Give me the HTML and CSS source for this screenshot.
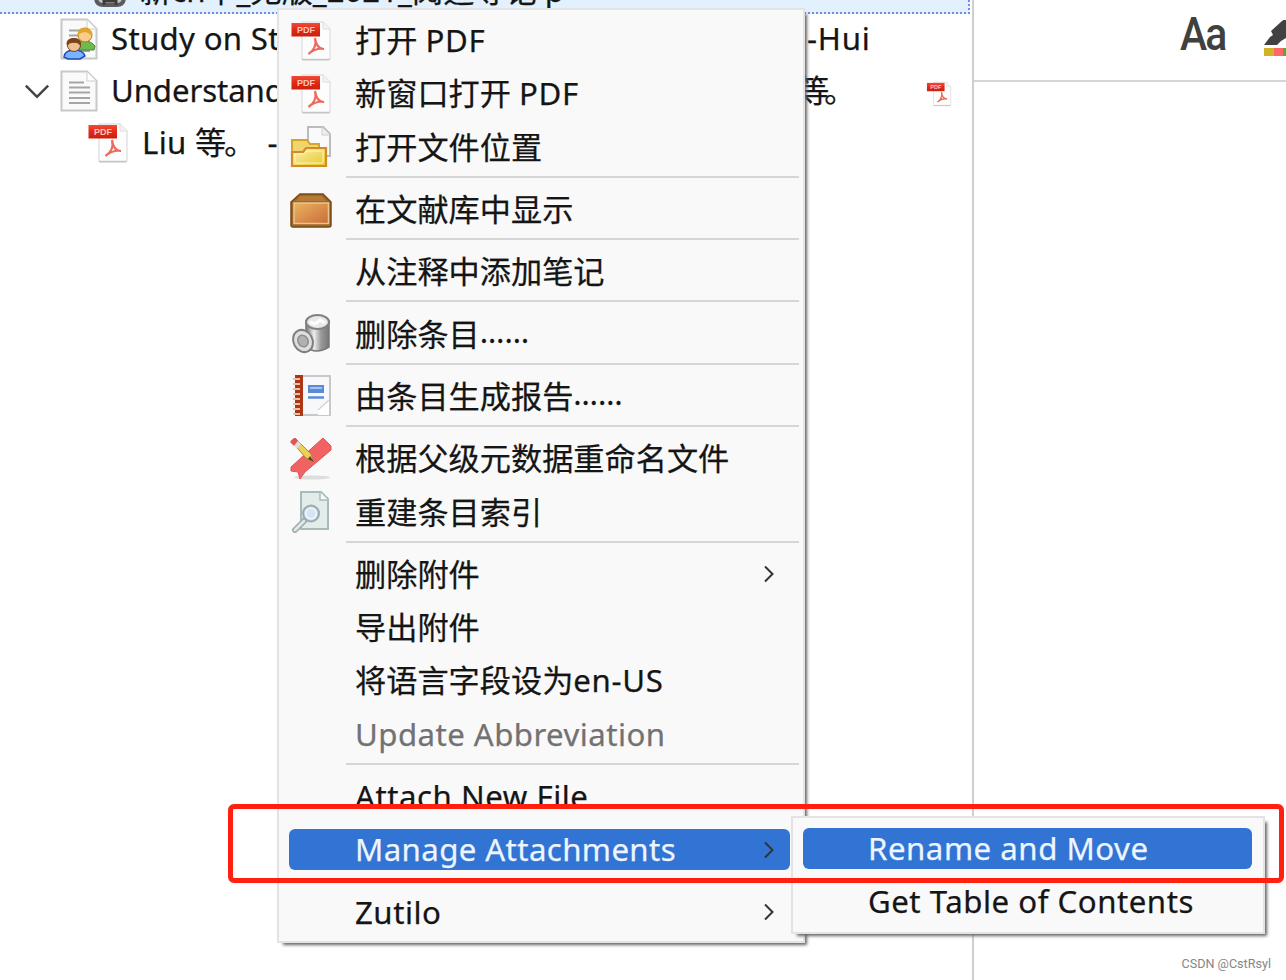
FILE: index.html
```html
<!DOCTYPE html>
<html lang="zh-CN">
<head>
<meta charset="utf-8">
<title>Zotero</title>
<link rel="stylesheet" href="styles.css">
</head>
<body>
<svg class="defs" aria-hidden="true">
  <defs>
    <linearGradient id="red" x1="0" y1="0" x2="0" y2="1"><stop offset="0" stop-color="#f04a38"/><stop offset=".5" stop-color="#e42815"/><stop offset="1" stop-color="#c9200f"/></linearGradient>
    <linearGradient id="gold" x1="0" y1="0" x2="1" y2="1"><stop offset="0" stop-color="#faf0b4"/><stop offset="1" stop-color="#e8c922"/></linearGradient>
    <linearGradient id="wood" x1="0" y1="0" x2="1" y2="1"><stop offset="0" stop-color="#e9b45f"/><stop offset="1" stop-color="#cb6c39"/></linearGradient>
    <linearGradient id="steel"><stop offset="0" stop-color="#777"/><stop offset=".35" stop-color="#eee"/><stop offset=".65" stop-color="#999"/><stop offset="1" stop-color="#777"/></linearGradient>
    <symbol id="pdf" viewBox="0 0 42 42">
      <path d="M12 2H33L40 9V38Q40 40 38 40H14Q12 40 12 38Z" fill="#fdfdfd" stroke="#e2e2e2" stroke-width="1.5"/>
      <path d="M12 39.5H39.5" stroke="#c5c5c5" stroke-width="1.5"/>
      <path d="M33 2V9H40" fill="#f3f3f3" stroke="#dedede"/>
      <path d="M25 18C27 26 23 31 18.500 34M25 18C26 26 30 29 34 29C28 28 23 30 18.500 34" fill="none" stroke="#ee6a5e" stroke-width="2.200"/>
      <rect x="1.500" y="3" width="28.500" height="13.500" fill="url(#red)"/>
      <text x="16" y="12.500" class="pdf-label">PDF</text>
    </symbol>
    <symbol id="page" viewBox="0 0 38 42">
      <path d="M1.500 1.500H27L36.500 11V40.500H1.500Z" fill="#fafafa" stroke="#c8c8c8" stroke-width="2"/>
      <path d="M27 2V11H36" fill="#fff" stroke="#ddd" stroke-width="1.500"/>
      <path d="M9 12.500H24M9 17.500H30M9 22.500H30M9 28H30M9 33H30" stroke="#a5a5a5" stroke-width="1.800"/>
    </symbol>
    <symbol id="chev" viewBox="0 0 12 18"><path d="M2 1.500L9.500 9L2 16.500" fill="none" stroke="#333" stroke-width="2"/></symbol>
  </defs>
</svg>
<div class="app">
  <section class="library">
    <div class="row selected">
      <svg class="clip" viewBox="0 0 34 30"><path d="M3 19Q3 27 10 27H24Q31 27 31 19" fill="#c4c4c4" stroke="#5c5c5c" stroke-width="4"/><path d="M11 27V20M23 27V20M11 23H23" fill="none" stroke="#3c3c3c" stroke-width="3"/></svg>
      <span class="file">新cn平_无版_2021_阅造等记 p</span>
    </div>
    <div class="row">
      <span class="twisty"></span>
      <svg class="item-icon" viewBox="0 0 38 42"><use href="#page"/>
        <path d="M17 31Q17 23 24 23Q31 23 35 28L34 32H18Z" fill="#70b94c" stroke="#438a2e"/><circle cx="25" cy="17" r="7" fill="#f8cc8a" stroke="#b77a1a"/><path d="M18 17Q17 9 25 10Q33 10 32 19Q29 14 24 14Q20 15 18 17Z" fill="#e4a62a"/>
        <path d="M4 39Q5 32 14 32Q23 32 25 38L20 41H8Z" fill="#78b4ff" stroke="#2547bd" stroke-width="1.500"/><circle cx="14" cy="27" r="6.500" fill="#efc193" stroke="#774017"/><path d="M7 28Q5 20 14 20Q22 20 21 29Q18 24 14 25Q10 24 7 28Z" fill="#7b431b"/></svg>
      <span class="title">Study on St</span>
      <span class="creator">-Hui</span>
    </div>
    <div class="row">
      <svg class="twisty" viewBox="0 0 24 16"><path d="M1.500 2.500L12 13L22.500 2.500" fill="none" stroke="#444" stroke-width="2.400"/></svg>
      <svg class="item-icon"><use href="#page"/></svg>
      <span class="title second">Understand</span>
      <span class="creator etal">等。</span>
      <svg class="attachment"><use href="#pdf"/></svg>
    </div>
    <div class="row child">
      <svg class="pdf-icon"><use href="#pdf"/></svg>
      <span class="title nested">Liu <span class="tight">等。</span><span class="dash">-</span></span>
    </div>
  </section>
  <section class="reader">
    <div class="toolbar">
      <span class="font-button">Aa</span>
      <svg class="marker" viewBox="0 0 30 36"><path d="M0 25L6 17L9 15L7 11L18 1L24 -3L38 8L22 18L17 21L13 25Z" fill="#414141"/><path d="M0 28H10V36H0Z" fill="#d0b326"/><path d="M10 28H19V36H10Z" fill="#ff6668"/><path d="M19 28H30V36H19Z" fill="#4caf2d"/></svg>
    </div>
  </section>
</div>

<nav class="menu main-menu">
  <div class="item"><span class="icon"><svg class="i42"><use href="#pdf"/></svg></span><span>打开 <i class="pdf-word">PDF</i></span></div>
  <div class="item"><span class="icon"><svg class="i42"><use href="#pdf"/></svg></span><span>新窗口打开 <i class="pdf-word">PDF</i></span></div>
  <div class="item"><span class="icon"><svg class="i42" viewBox="0 0 42 42"><path d="M18 1H33L40 8V30H18Z" fill="#fafafa" stroke="#bbb" stroke-width="2"/><path d="M32 1V9H40" fill="#eee" stroke="#ccc"/><path d="M2 40V14H17L20 18H29V40Z" fill="#efd56c" stroke="#d5a529" stroke-width="2"/><path d="M2 40V26H13L16 22H36V40Z" fill="url(#gold)" stroke="#d58a28" stroke-width="2.200"/><path d="M5 37V28H14L17 25H33V37Z" fill="none" stroke="#fff3bd"/></svg></span><span>打开文件位置</span></div>
  <hr>
  <div class="item"><span class="icon"><svg class="i42" viewBox="0 0 42 42"><path d="M10 5H33L41 13V36Q41 38 39 38H3Q1 38 1 36V13Z" fill="#9c672b" stroke="#7b4a14" stroke-width="1.500"/><path d="M10 7H32L36 12H6Z" fill="#b37b36"/><rect x="4" y="14" width="34.500" height="20.500" fill="url(#wood)" stroke="#ecc58d" stroke-width="1.500"/></svg></span><span>在文献库中显示</span></div>
  <hr>
  <div class="item"><span class="icon"></span><span>从注释中添加笔记</span></div>
  <hr>
  <div class="item"><span class="icon"><svg class="i42" viewBox="0 0 42 42"><path d="M16 8V34Q26 42 39 34V8Z" fill="url(#steel)" stroke="#777" stroke-width="1.500"/><ellipse cx="27.500" cy="9" rx="11.500" ry="7" fill="#e8e8e8" stroke="#808080" stroke-width="2"/><path d="M20 9L25 11L30 7L35 10" fill="none" stroke="#fff" stroke-width="3"/><ellipse cx="13" cy="28" rx="9.500" ry="11.500" transform="rotate(-28 13 28)" fill="#dfdfdf" stroke="#808080" stroke-width="2"/><ellipse cx="13" cy="28" rx="5" ry="6" transform="rotate(-28 13 28)" fill="#b0b0b0" stroke="#8e8e8e" stroke-width="1.500"/></svg></span><span class="dots">删除条目<i>……</i></span></div>
  <hr>
  <div class="item"><span class="icon"><svg class="i42" viewBox="0 0 42 42"><path d="M12 1H40V40H12Z" fill="#f7f8fb" stroke="#c8c8c8" stroke-width="2"/><path d="M5 0H13V41H5Z" fill="#ad3715"/><path d="M3 4H10M3 9H10M3 14H10M3 19H10M3 24H10M3 29H10M3 34H10M3 39H10" stroke="#e9c1aa" stroke-width="2"/><path d="M18 10H34V18H18Z" fill="#5d8ad7"/><path d="M20 13H32" stroke="#a9c3f0" stroke-width="2"/><path d="M18 22.500H34" stroke="#5d8ad7" stroke-width="2.500"/><path d="M28 36L39 25V40H28Z" fill="#fff"/><path d="M28 35L39 25" stroke="#d5d5d5" stroke-width="1.500"/></svg></span><span class="dots">由条目生成报告<i>……</i></span></div>
  <hr>
  <div class="item"><span class="icon"><svg class="i42" viewBox="0 0 42 42"><ellipse cx="22" cy="39.500" rx="18" ry="2" fill="#ddd"/><path d="M33 0L41 8V12L15 34L10 41L8 34L1 33V29Z" fill="#f16363" stroke="#e45050"/><path d="M1 3L5 0L21 16L23 23L16 20Z" fill="#ebcf58" stroke="#ad8a34"/><path d="M0 4L5 -1L8 3L4 8Z" fill="#df5656"/><path d="M4 8L8 3L11 6L7 11Z" fill="#ddd"/><path d="M20 18L24 24L18 21Z" fill="#514328"/></svg></span><span>根据父级元数据重命名文件</span></div>
  <div class="item"><span class="icon"><svg class="i42" viewBox="0 0 42 42"><path d="M11 1H31L38 8V38H11Z" fill="#e2eceb" stroke="#a8bbba" stroke-width="2"/><path d="M30 1V9H38" fill="#f8fafa" stroke="#a8bbba" stroke-width="1.500"/><path d="M15 29L5 39" stroke="#9eafaf" stroke-width="6" stroke-linecap="round"/><path d="M14 30L5 39" stroke="#e2eaea" stroke-width="2.500" stroke-linecap="round"/><circle cx="21" cy="22.500" r="8" fill="#bfd2e8" stroke="#9dacae" stroke-width="2"/><circle cx="21" cy="22.500" r="5.500" fill="#d6e4f5" stroke="#f2f7fb" stroke-width="1.500"/></svg></span><span>重建条目索引</span></div>
  <hr>
  <div class="item"><span class="icon"></span><span>删除附件</span><svg class="chev"><use href="#chev"/></svg></div>
  <div class="item"><span class="icon"></span><span>导出附件</span></div>
  <div class="item"><span class="icon"></span><span>将语言字段设为<i class="lang">en-US</i></span></div>
  <div class="item disabled"><span class="icon"></span><span class="update">Update Abbreviation</span></div>
  <hr>
  <div class="item"><span class="icon"></span><span class="attach">Attach New File</span></div>
  <div class="item active"><span class="icon"></span><span class="manage">Manage Attachments</span><svg class="chev"><use href="#chev"/></svg></div>
  <hr>
  <div class="item"><span class="icon"></span><span class="attach">Zutilo</span><svg class="chev"><use href="#chev"/></svg></div>
</nav>

<nav class="menu sub-menu">
  <div class="item active"><span class="attach">Rename and Move</span></div>
  <div class="item"><span class="attach">Get Table of Contents</span></div>
</nav>
<div class="highlight-frame"></div>
<div class="watermark">CSDN @CstRsyl</div>
</body>
</html>
```
FILE: styles.css
```css
* { box-sizing: border-box; }
body {
  margin: 0;
  width: 1286px;
  height: 980px;
  overflow: hidden;
  position: relative;
  background: #fff;
  color: #151515;
  font: 31.2px/1 "Noto Sans", "Noto Sans CJK SC", sans-serif;
  -webkit-text-stroke: 0.25px currentColor;
}
i { font-style: normal; }
svg { display: block; flex: none; overflow: hidden; }
.defs { position: absolute; width: 0; height: 0; }
.pdf-label { font: bold 9px "Liberation Sans", sans-serif; fill: #ffc4ba; text-anchor: middle; -webkit-text-stroke: 0; }

.app { display: flex; height: 980px; }
.library { flex: none; width: 974px; border-right: 2px solid #cfcfcf; overflow: hidden; }
.row { display: flex; align-items: center; height: 52px; white-space: nowrap; padding-left: 24px; }
.row.selected {
  width: 970px;
  height: 14px;
  padding-left: 92px;
  align-items: flex-end;
  background: #e3f1ff;
  border-bottom: 2px dotted #6f8fe4;
  border-right: 2px dotted #6f8fe4;
  overflow: hidden;
}
.clip { width: 36px; height: 30px; margin-bottom: 4px; }
.file { margin-left: 12px; line-height: 44px; margin-bottom: 0; }
.twisty { width: 26px; height: 17px; flex: none; margin-top: -2px; }
.item-icon { width: 38px; height: 42px; margin: -2px 0 0 10px; }
.title { width: 188px; margin: -4px 0 0 13px; line-height: 44px; flex: none; letter-spacing: 0.3px; }
.title.second { width: 168px; margin-right: 20px; letter-spacing: -0.1px; }
.creator { width: 119px; margin: -4px 0 0 508px; line-height: 44px; flex: none; letter-spacing: 0.8px; }
.creator.etal { margin-left: 499px; width: 128px; letter-spacing: -5px; }
.attachment { width: 26px; height: 26px; margin-top: 4px; }
.child { padding-left: 87px; }
.pdf-icon { width: 42px; height: 42px; margin-top: -3px; }
.title.nested { width: 160px; }
.tight { letter-spacing: -2px; }
.dash { margin-left: 14px; }

.reader { flex: 1; min-width: 0; }
.toolbar { height: 82px; border-bottom: 2px solid #d5d5d5; display: flex; padding: 0 0 0 206px; overflow: hidden; }
.font-button { width: 84px; flex: none; font: 500 46px/68px Roboto, sans-serif; letter-spacing: -2px; color: #404040; transform: scaleX(.89); transform-origin: left center; -webkit-text-stroke: 0; }
.marker { width: 30px; height: 36px; margin-top: 20px; }

.menu {
  position: absolute;
  background: #f9f9f9;
  border: 2px solid #e3e3e3;
  box-shadow: 4px 4px 3px -2px #666;
  white-space: nowrap;
}
.main-menu { left: 277px; top: 8px; width: 528px; height: 935px; padding: 4px 4px 0 10px; }
.item { position: relative; display: flex; align-items: center; height: 53.3px; line-height: 41px; width: 501px; }
.icon { width: 66px; flex: none; padding-left: 1px; }
.i42 { width: 42px; height: 42px; }
.chev { width: 12px; height: 18px; margin-left: auto; margin-right: 15px; }
hr { height: 2px; border: 0; background: #d6d6d6; margin: 2px 0 5px 57px; }
.pdf-word, .lang { letter-spacing: 0.7px; }
.dots i { position: relative; top: -3px; }
.update { letter-spacing: 0.45px; }
.attach { letter-spacing: 0.53px; }
.manage { letter-spacing: 0.4px; }
.active { color: #eef5ff; }
.active::before {
  content: "";
  position: absolute;
  inset: 6px 0 6px 0;
  background: #3174d4;
  border-radius: 6px;
}
.active > * { position: relative; }
.disabled { color: #727272; }
.sub-menu { left: 791px; top: 816px; width: 474px; height: 118px; padding: 4px 10px; }
.sub-menu .item { width: 449px; padding-left: 65px; }

.highlight-frame {
  position: absolute;
  left: 228px;
  top: 804px;
  width: 1056px;
  height: 79px;
  border: 5px solid #ff2010;
  border-radius: 6px;
}
.watermark { position: absolute; right: 15px; bottom: 9px; font: 12.6px/15px Roboto, sans-serif; color: #858585; -webkit-text-stroke: 0; }
```
